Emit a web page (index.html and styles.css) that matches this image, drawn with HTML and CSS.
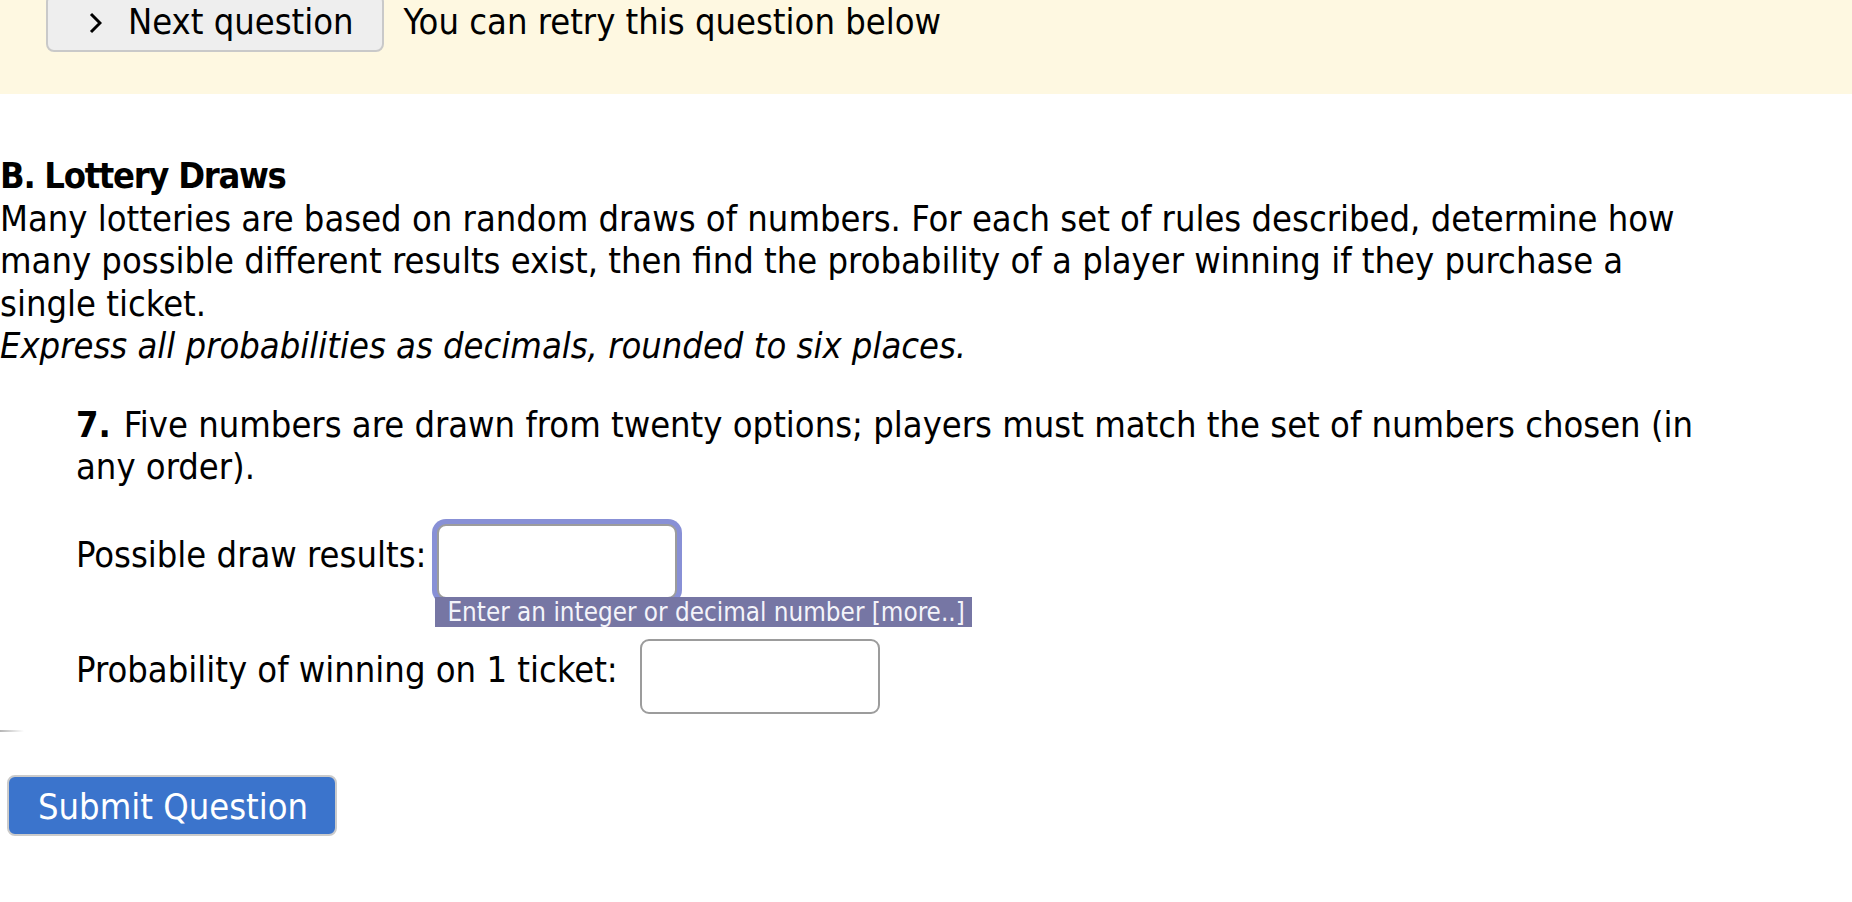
FILE: index.html
```html
<!DOCTYPE html>
<html lang="en">
<head>
<meta charset="utf-8">
<title>B. Lottery Draws</title>
<link rel="stylesheet" href="styles.css">
</head>
<body>
<div class="banner">
  <button class="next-btn" type="button">
    <svg class="chev" width="13" height="22" viewBox="0 0 13 22" aria-hidden="true"><polyline points="2,2 11,11 2,20" fill="none" stroke="#000" stroke-width="3"/></svg>
    <span>Next question</span>
  </button>
  <span class="retry">You can retry this question below</span>
</div>

<div class="content">
  <div class="intro">
    <div class="sec-title">B. Lottery Draws</div>
    <div class="sec-text">Many lotteries are based on random draws of numbers. For each set of rules described, determine how many possible different results exist, then find the probability of a player winning if they purchase a single ticket.</div>
    <div class="sec-note">Express all probabilities as decimals, rounded to six places.</div>
  </div>

  <div class="question">
    <p class="q-text"><b class="q-num">7.</b>Five numbers are drawn from twenty options; players must match the set of numbers chosen (in any order).</p>
    <div class="row row-first">
      <span class="label">Possible draw results:</span>
      <span class="field">
        <input class="ans focused" type="text" aria-label="Possible draw results">
        <span class="tip">Enter an integer or decimal number [more..]</span>
      </span>
    </div>
    <div class="row row-second">
      <span class="label">Probability of winning on 1 ticket:</span>
      <span class="field">
        <input class="ans" type="text" aria-label="Probability of winning on 1 ticket">
      </span>
    </div>
  </div>
  <div class="fade-mark"></div>
  <button class="submit-btn" type="button">Submit Question</button>
</div>
</body>
</html>
```
FILE: styles.css
```css
html, body {
  margin: 0;
  padding: 0;
  background: #ffffff;
}
body {
  font-family: "DejaVu Sans Condensed", "DejaVu Sans", sans-serif;
  font-stretch: condensed;
  font-size: 36px;
  line-height: 42.5px;
  color: #000;
}
.banner {
  background: #fef8e1;
  height: 94px;
  box-sizing: border-box;
  padding-left: 46px;
  display: flex;
  align-items: flex-start;
  gap: 20px;
}
.next-btn {
  font: inherit;
  font-stretch: condensed;
  line-height: 42px;
  color: #000;
  background: #eeeeee;
  border: 2px solid #c9c9c9;
  border-radius: 8px;
  margin-top: -6px;
  padding: 5px 28px 7px 41px;
  display: flex;
  align-items: center;
  gap: 26px;
}
.chev {
  display: block;
  margin-top: 2px;
}
.retry {
  line-height: 42px;
  padding-top: 1px;
}
.content {
  width: 1705px;
}
.intro {
  margin-top: 61px;
}
.sec-title {
  font-weight: bold;
  letter-spacing: -1.3px;
}
.sec-note {
  font-style: italic;
}
.question {
  padding-left: 76px;
  margin-top: 36px;
}
.q-text {
  margin: 0;
}
.q-num {
  display: inline-block;
  font-weight: bold;
  margin-right: 13px;
}
.row {
  display: flex;
  align-items: center;
}
.row-first {
  margin-top: 35px;
  gap: 11px;
}
.row-second {
  margin-top: 40px;
  gap: 22px;
}
.label {
  padding-bottom: 12px;
}
.field {
  position: relative;
  display: block;
}
.ans {
  display: block;
  box-sizing: border-box;
  width: 240px;
  height: 75px;
  border: 2px solid #9c9c9c;
  border-radius: 9px;
  background: #fff;
  font: inherit;
  padding: 0 10px;
  outline: none;
}
.ans.focused {
  box-shadow: 0 0 0 5px #8890d6;
}
.tip {
  position: absolute;
  left: -2px;
  top: 73px;
  z-index: 2;
  background: #7676a4;
  color: #f4f4fa;
  font-size: 25.8px;
  line-height: 30px;
  white-space: nowrap;
  padding: 0 7px 0 12px;
}
.fade-mark {
  margin-top: 16px;
  width: 24px;
  height: 2px;
  background: linear-gradient(to right, #b5b5b5, rgba(255,255,255,0));
}
.submit-btn {
  display: block;
  margin: 43px 0 0 7px;
  font: inherit;
  font-stretch: condensed;
  line-height: 42px;
  color: #fff;
  background: #3b74cc;
  border: 2px solid #cbcbcb;
  border-radius: 8px;
  padding: 9px 27px 6px 29px;
}
```
